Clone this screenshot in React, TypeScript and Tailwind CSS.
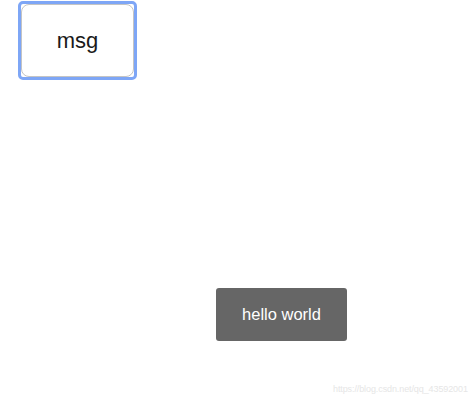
import React from 'react'

const App = () => {
  return (
    <div className="relative w-[474px] h-[399px] bg-white overflow-hidden font-['Liberation_Sans',Arial,sans-serif]">
      {/* focused button */}
      <div className="pl-[18px] pt-[1px]">
        <div className="w-[119px] h-[79px] border-[3px] border-[#7ea6f6] rounded-[5px] flex">
          <button className="flex-1 bg-white border border-[#c4c4c4] rounded-[8px] text-[22px] text-[#1a1a1a] flex items-center justify-center">
            msg
          </button>
        </div>
      </div>

      {/* toast */}
      <div className="absolute left-[216px] top-[288px] w-[131px] h-[53px] bg-[#666666] rounded-[3px] flex items-center justify-center text-white text-[16.5px]">
        hello world
      </div>

      {/* watermark */}
      <div className="absolute left-[333px] top-[383px] whitespace-nowrap text-[9px] tracking-[-0.1px] text-[#e6e6e6]">
        https://blog.csdn.net/qq_43592001
      </div>
    </div>
  )
}

export default App
